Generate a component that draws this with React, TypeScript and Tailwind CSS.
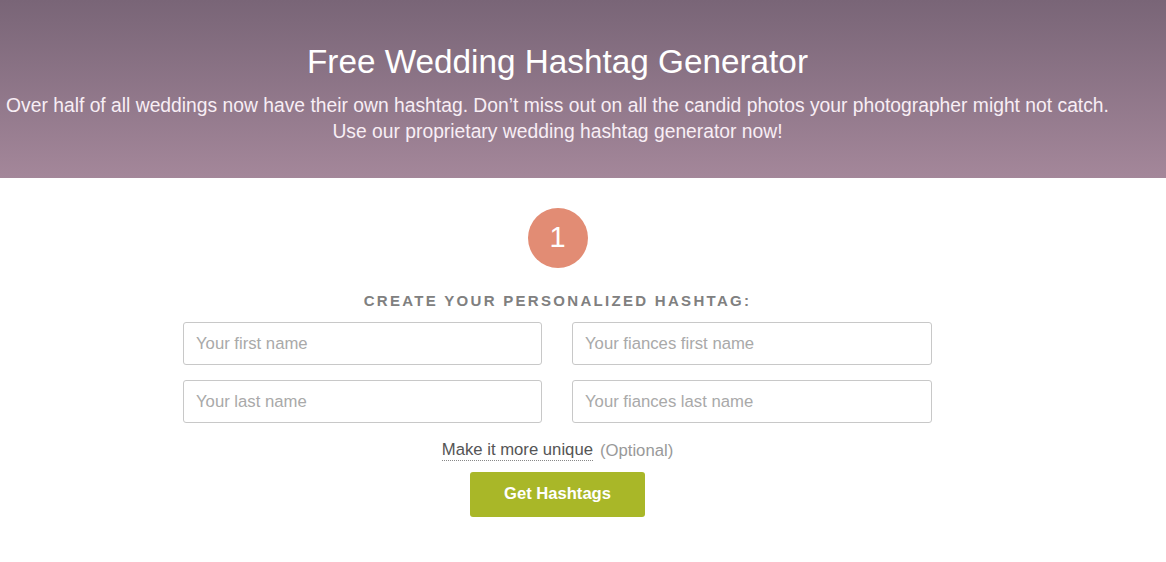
import React from "react";

const Field = ({ placeholder }: { placeholder: string }) => (
  <input
    type="text"
    placeholder={placeholder}
    className="w-full h-[43px] px-[12px] border border-[#c8c8c8] rounded-[3px] text-[16.7px] text-[#555] placeholder:text-[#a9a9a9] outline-none bg-white"
  />
);

const App = () => {
  return (
    <div className="min-h-screen bg-white" style={{ fontFamily: '"Liberation Sans", Arial, sans-serif' }}>
      <div className="h-[178px] bg-gradient-to-b from-[#796577] to-[#a4879a]">
        <div className="w-[1115px] flex flex-col items-center pt-[42px] text-white">
          <h1 className="text-[33.3px] leading-[40px]">Free Wedding Hashtag Generator</h1>
          <p className="mt-[11px] text-[19.3px] leading-[26px] text-center text-[#f8eef5] whitespace-nowrap">
            Over half of all weddings now have their own hashtag. Don’t miss out on all the candid photos your photographer might not catch.
            <br />
            Use our proprietary wedding hashtag generator now!
          </p>
        </div>
      </div>
      <div className="w-[1115px] flex flex-col items-center pt-[30px]">
        <div className="w-[60px] h-[60px] rounded-full bg-[#e28c74] flex items-center justify-center text-white text-[29px]">
          1
        </div>
        <div className="mt-[23px] text-[15px] leading-[20px] font-bold tracking-[2.3px] text-[#808080]">
          CREATE YOUR PERSONALIZED HASHTAG:
        </div>
        <div className="mt-[11px] grid grid-cols-[359px_360px] gap-x-[30px] gap-y-[15px]">
          <Field placeholder="Your first name" />
          <Field placeholder="Your fiances first name" />
          <Field placeholder="Your last name" />
          <Field placeholder="Your fiances last name" />
        </div>
        <div className="mt-[17px] flex items-center gap-[7px] text-[16.7px] leading-[20px]">
          <span className="text-[#555] border-b border-dotted border-[#888]">Make it more unique</span>
          <span className="text-[#999]">(Optional)</span>
        </div>
        <button className="mt-[11px] w-[175px] h-[45px] rounded-[3px] bg-[#a9b728] text-white font-bold text-[16.6px]">
          Get Hashtags
        </button>
      </div>
    </div>
  );
};

export default App;
